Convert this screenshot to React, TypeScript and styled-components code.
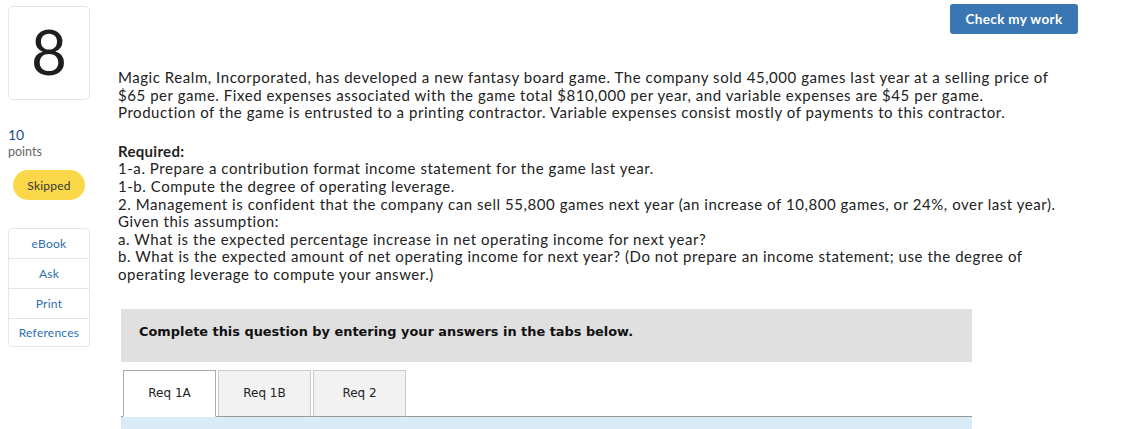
import React from "react";
import styled, { createGlobalStyle } from "styled-components";

const Global = createGlobalStyle`
  html, body { margin: 0; padding: 0; background: #fff; }
  body { font-family: Lato, "Open Sans", sans-serif; color: #222; overflow: hidden; }
`;

const Page = styled.div`
  display: flex;
  align-items: flex-start;
  width: 1144px;
  height: 429px;
  overflow: hidden;
`;

const Side = styled.aside`
  width: 82px;
  margin-left: 8px;
  padding-top: 6px;
  display: flex;
  flex-direction: column;
`;

const NumberBox = styled.div`
  height: 94px;
  box-sizing: border-box;
  border: 1px solid #e6e6e6;
  border-radius: 5px;
  display: flex;
  align-items: center;
  justify-content: center;
  font-family: Lato, sans-serif;
  font-size: 62px;
  font-weight: 400;
  color: #1e1e1e;
  padding-bottom: 4px;
`;

const Points = styled.div`
  margin-top: 26px;
  line-height: 17px;
`;

const PointsValue = styled.div`
  font-size: 14px;
  color: #1b4f8a;
`;

const PointsLabel = styled.div`
  font-size: 12.5px;
  color: #666;
`;

const Pill = styled.div`
  margin: 10px 0 0 5px;
  width: 72px;
  height: 30px;
  border-radius: 15px;
  background: #fbd84a;
  color: #333;
  font-size: 12px;
  letter-spacing: 0.2px;
  display: flex;
  align-items: center;
  justify-content: center;
`;

const Tools = styled.div`
  margin-top: 28px;
  border: 1px solid #e6e6e6;
  border-radius: 4px;
  display: flex;
  flex-direction: column;
`;

const ToolItem = styled.div<{ $last?: boolean }>`
  height: ${(p) => (p.$last ? 27 : 29)}px;
  display: flex;
  align-items: center;
  justify-content: center;
  font-size: 12px;
  letter-spacing: 0.25px;
  color: #2d6db0;
  border-bottom: ${(p) => (p.$last ? "none" : "1px solid #e6e6e6")};
`;

const Main = styled.main`
  margin-left: 28px;
  width: 1000px;
  display: flex;
  flex-direction: column;
`;

const TopBar = styled.div`
  display: flex;
  justify-content: flex-end;
  padding: 4px 40px 0 0;
`;

const CheckButton = styled.button`
  width: 128px;
  height: 30px;
  border: none;
  border-radius: 3px;
  background: #3a76b4;
  color: #fff;
  font-family: Lato, sans-serif;
  font-weight: 700;
  font-size: 13.5px;
  letter-spacing: 0.35px;
  padding: 0;
  cursor: pointer;
`;

const Question = styled.div`
  margin-top: 35px;
  font-family: Lato, sans-serif;
  font-size: 15px;
  letter-spacing: 0.55px;
  line-height: 17.6px;
  color: #222;
`;

const Para = styled.p`
  margin: 0 0 21px 0;
`;

const Strong = styled.strong`
  font-weight: 700;
  letter-spacing: 0.3px;
`;

const Instruction = styled.div`
  margin: 4px 0 0 3px;
  width: 851px;
  height: 53px;
  box-sizing: border-box;
  background: #e0e0e0;
  padding: 15px 18px 0;
  font-family: "DejaVu Sans", Verdana, sans-serif;
  font-weight: 700;
  font-size: 12.9px;
  color: #111;
`;

const TabArea = styled.div`
  margin: 8px 0 0 3px;
  width: 851px;
`;

const TabRow = styled.div`
  display: flex;
  gap: 2px;
  padding-left: 2px;
  border-bottom: 1px solid #999;
`;

const Tab = styled.div<{ $active?: boolean }>`
  width: 93px;
  height: 47px;
  box-sizing: border-box;
  margin-bottom: -1px;
  display: flex;
  align-items: center;
  justify-content: center;
  font-family: "DejaVu Sans", Verdana, sans-serif;
  font-size: 12px;
  color: #222;
  background: ${(p) => (p.$active ? "#fff" : "#f2f2f2")};
  border: 1px solid ${(p) => (p.$active ? "#aaa" : "#ccc")};
  border-bottom: ${(p) => (p.$active ? "1px solid #fff" : "1px solid #999")};
`;

const TabPanel = styled.div`
  height: 30px;
  background: #d8ebf6;
`;

export default function App() {
  return (
    <>
      <Global />
      <Page>
        <Side>
          <NumberBox>8</NumberBox>
          <Points>
            <PointsValue>10</PointsValue>
            <PointsLabel>points</PointsLabel>
          </Points>
          <Pill>Skipped</Pill>
          <Tools>
            <ToolItem>eBook</ToolItem>
            <ToolItem>Ask</ToolItem>
            <ToolItem>Print</ToolItem>
            <ToolItem $last>References</ToolItem>
          </Tools>
        </Side>
        <Main>
          <TopBar>
            <CheckButton>Check my work</CheckButton>
          </TopBar>
          <Question>
            <Para>
              Magic Realm, Incorporated, has developed a new fantasy board game. The company sold 45,000 games last year at a selling price of
              <br />
              $65 per game. Fixed expenses associated with the game total $810,000 per year, and variable expenses are $45 per game.
              <br />
              Production of the game is entrusted to a printing contractor. Variable expenses consist mostly of payments to this contractor.
            </Para>
            <Para>
              <Strong>Required:</Strong>
              <br />
              1-a. Prepare a contribution format income statement for the game last year.
              <br />
              1-b. Compute the degree of operating leverage.
              <br />
              2. Management is confident that the company can sell 55,800 games next year (an increase of 10,800 games, or 24%, over last year).
              <br />
              Given this assumption:
              <br />
              a. What is the expected percentage increase in net operating income for next year?
              <br />
              b. What is the expected amount of net operating income for next year? (Do not prepare an income statement; use the degree of
              <br />
              operating leverage to compute your answer.)
            </Para>
          </Question>
          <Instruction>Complete this question by entering your answers in the tabs below.</Instruction>
          <TabArea>
            <TabRow>
              <Tab $active>Req 1A</Tab>
              <Tab>Req 1B</Tab>
              <Tab>Req 2</Tab>
            </TabRow>
            <TabPanel />
          </TabArea>
        </Main>
      </Page>
    </>
  );
}
